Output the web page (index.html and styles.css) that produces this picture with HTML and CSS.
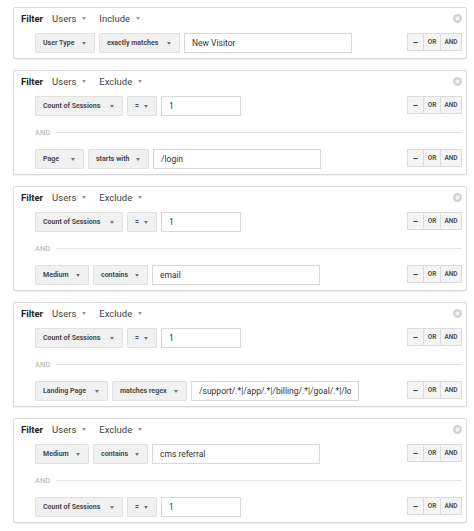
FILE: index.html
```html
<!DOCTYPE html>
<html lang="en">
<head>
    <meta charset="UTF-8">
    <meta name="viewport" content="width=device-width, initial-scale=1.0">
    <title>Segment filters</title>
    <link rel="stylesheet" href="styles.css">
</head>
<body>
<div class="page">

    <div class="filter">
        <div class="filter-head">
            <b class="filter-label">Filter</b>
            <span class="drop">Users <i class="caret"></i></span>
            <span class="drop">Include <i class="caret"></i></span>
            <svg class="close" width="9" height="9" viewBox="0 0 10 10"><circle cx="5" cy="5" r="5" fill="#d4d4d4"/><path d="M3.2 3.2l3.6 3.6M6.8 3.2l-3.6 3.6" stroke="#fff" stroke-width="1.2"/></svg>
        </div>
        <div class="cond">
            <span class="sel w60">User Type <i class="caret"></i></span>
            <span class="sel w81">exactly matches <i class="caret"></i></span>
            <span class="field">New Visitor</span>
            <span class="ops"><span class="op minus">&minus;</span><span class="op">OR</span><span class="op and">AND</span></span>
        </div>
    </div>

    <div class="filter">
        <div class="filter-head">
            <b class="filter-label">Filter</b>
            <span class="drop">Users <i class="caret"></i></span>
            <span class="drop">Exclude <i class="caret"></i></span>
            <svg class="close" width="9" height="9" viewBox="0 0 10 10"><circle cx="5" cy="5" r="5" fill="#d4d4d4"/><path d="M3.2 3.2l3.6 3.6M6.8 3.2l-3.6 3.6" stroke="#fff" stroke-width="1.2"/></svg>
        </div>
        <div class="cond">
            <span class="sel w88">Count of Sessions <i class="caret"></i></span>
            <span class="sel w30">= <i class="caret"></i></span>
            <span class="field short">1</span>
            <span class="ops"><span class="op minus">&minus;</span><span class="op">OR</span><span class="op and">AND</span></span>
        </div>
        <div class="and-sep"><span>AND</span></div>
        <div class="cond">
            <span class="sel w49">Page <i class="caret"></i></span>
            <span class="sel w61">starts with <i class="caret"></i></span>
            <span class="field">/login</span>
            <span class="ops"><span class="op minus">&minus;</span><span class="op">OR</span><span class="op and">AND</span></span>
        </div>
    </div>

    <div class="filter">
        <div class="filter-head">
            <b class="filter-label">Filter</b>
            <span class="drop">Users <i class="caret"></i></span>
            <span class="drop">Exclude <i class="caret"></i></span>
            <svg class="close" width="9" height="9" viewBox="0 0 10 10"><circle cx="5" cy="5" r="5" fill="#d4d4d4"/><path d="M3.2 3.2l3.6 3.6M6.8 3.2l-3.6 3.6" stroke="#fff" stroke-width="1.2"/></svg>
        </div>
        <div class="cond">
            <span class="sel w88">Count of Sessions <i class="caret"></i></span>
            <span class="sel w30">= <i class="caret"></i></span>
            <span class="field short">1</span>
            <span class="ops"><span class="op minus">&minus;</span><span class="op">OR</span><span class="op and">AND</span></span>
        </div>
        <div class="and-sep"><span>AND</span></div>
        <div class="cond">
            <span class="sel w54">Medium <i class="caret"></i></span>
            <span class="sel w55">contains <i class="caret"></i></span>
            <span class="field">email</span>
            <span class="ops"><span class="op minus">&minus;</span><span class="op">OR</span><span class="op and">AND</span></span>
        </div>
    </div>

    <div class="filter">
        <div class="filter-head">
            <b class="filter-label">Filter</b>
            <span class="drop">Users <i class="caret"></i></span>
            <span class="drop">Exclude <i class="caret"></i></span>
            <svg class="close" width="9" height="9" viewBox="0 0 10 10"><circle cx="5" cy="5" r="5" fill="#d4d4d4"/><path d="M3.2 3.2l3.6 3.6M6.8 3.2l-3.6 3.6" stroke="#fff" stroke-width="1.2"/></svg>
        </div>
        <div class="cond">
            <span class="sel w88">Count of Sessions <i class="caret"></i></span>
            <span class="sel w30">= <i class="caret"></i></span>
            <span class="field short">1</span>
            <span class="ops"><span class="op minus">&minus;</span><span class="op">OR</span><span class="op and">AND</span></span>
        </div>
        <div class="and-sep"><span>AND</span></div>
        <div class="cond">
            <span class="sel w73">Landing Page <i class="caret"></i></span>
            <span class="sel w75">matches regex <i class="caret"></i></span>
            <span class="field"><span class="clip">/support/.*|/app/.*|/billing/.*|/goal/.*|/login.*</span></span>
            <span class="ops"><span class="op minus">&minus;</span><span class="op">OR</span><span class="op and">AND</span></span>
        </div>
    </div>

    <div class="filter">
        <div class="filter-head">
            <b class="filter-label">Filter</b>
            <span class="drop">Users <i class="caret"></i></span>
            <span class="drop">Exclude <i class="caret"></i></span>
            <svg class="close" width="9" height="9" viewBox="0 0 10 10"><circle cx="5" cy="5" r="5" fill="#d4d4d4"/><path d="M3.2 3.2l3.6 3.6M6.8 3.2l-3.6 3.6" stroke="#fff" stroke-width="1.2"/></svg>
        </div>
        <div class="cond">
            <span class="sel w54">Medium <i class="caret"></i></span>
            <span class="sel w55">contains <i class="caret"></i></span>
            <span class="field">cms referral</span>
            <span class="ops"><span class="op minus">&minus;</span><span class="op">OR</span><span class="op and">AND</span></span>
        </div>
        <div class="and-sep"><span>AND</span></div>
        <div class="cond">
            <span class="sel w88">Count of Sessions <i class="caret"></i></span>
            <span class="sel w30">= <i class="caret"></i></span>
            <span class="field short">1</span>
            <span class="ops"><span class="op minus">&minus;</span><span class="op">OR</span><span class="op and">AND</span></span>
        </div>
    </div>

</div>
</body>
</html>
```

FILE: styles.css
```css
*{
    margin: 0;
    padding: 0;
    box-sizing: border-box;
}
body{
    background: #fff;
    font-family: Roboto, "Liberation Sans", sans-serif;
    color: #444;
}
.page{
    padding: 7px 7px 0 13px;
}
.filter{
    border: 1px solid #dadada;
    border-radius: 2px;
    box-shadow: 0 1px 1px rgba(0,0,0,.06);
    padding: 1px 4px 5px 7px;
    margin-bottom: 11px;
}
.filter-head{
    display: flex;
    align-items: center;
    height: 18px;
    margin-bottom: 6px;
    font-size: 9.5px;
}
.filter-label{
    font-weight: bold;
    color: #222;
    margin-right: 9px;
}
.drop{
    display: flex;
    align-items: center;
    margin-right: 13px;
}
.drop .caret{
    margin-left: 6px;
    border-top-color: #999;
}
.close{
    margin-left: auto;
    margin-right: 0;
}
.caret{
    display: inline-block;
    width: 0;
    height: 0;
    border-left: 2.5px solid transparent;
    border-right: 2.5px solid transparent;
    border-top: 3px solid #777;
}

/* one condition line */
.cond{
    display: flex;
    align-items: center;
    gap: 4px;
    height: 20px;
    padding-left: 14px;
}
.sel{
    display: flex;
    align-items: center;
    justify-content: space-between;
    height: 20px;
    padding: 0 8px 0 7px;
    background: #f1f1f1;
    border: 1px solid #e1e1e1;
    border-radius: 1px;
    font-size: 7px;
    font-weight: bold;
    color: #4a4a4a;
    white-space: nowrap;
}
.w30{ width: 30px; }
.w49{ width: 49px; }
.w54{ width: 54px; }
.w55{ width: 55px; }
.w60{ width: 60px; }
.w61{ width: 61px; }
.w73{ width: 73px; }
.w75{ width: 75px; }
.w81{ width: 81px; }
.w88{ width: 88px; }

.field{
    display: flex;
    align-items: center;
    width: 168px;
    height: 20px;
    padding: 0 7px;
    border: 1px solid #d9d9d9;
    background: #fff;
    font-size: 8.5px;
    color: #333;
    white-space: nowrap;
}
.field.short{
    width: 80px;
}
.clip{
    display: block;
    overflow: hidden;
    width: 100%;
}
.ops{
    display: flex;
    margin-left: auto;
    height: 18px;
    align-self: flex-start;
}
.op{
    display: flex;
    align-items: center;
    justify-content: center;
    width: 17px;
    border: 1px solid #dcdcdc;
    background: #f4f4f4;
    font-size: 6.5px;
    font-weight: bold;
    color: #555;
}
.op.minus{
    font-size: 10px;
    color: #444;
}
.op + .op{
    width: 17px;
    border-left: 0;
}
.op.and{
    width: 21px;
}
.and-sep{
    display: flex;
    align-items: center;
    height: 33px;
    padding-left: 14px;
    font-size: 7.5px;
    color: #b0b0b0;
}
.and-sep::after{
    content: "";
    flex: 1;
    border-top: 1px solid #e2e2e2;
    margin-left: 6px;
}
```
